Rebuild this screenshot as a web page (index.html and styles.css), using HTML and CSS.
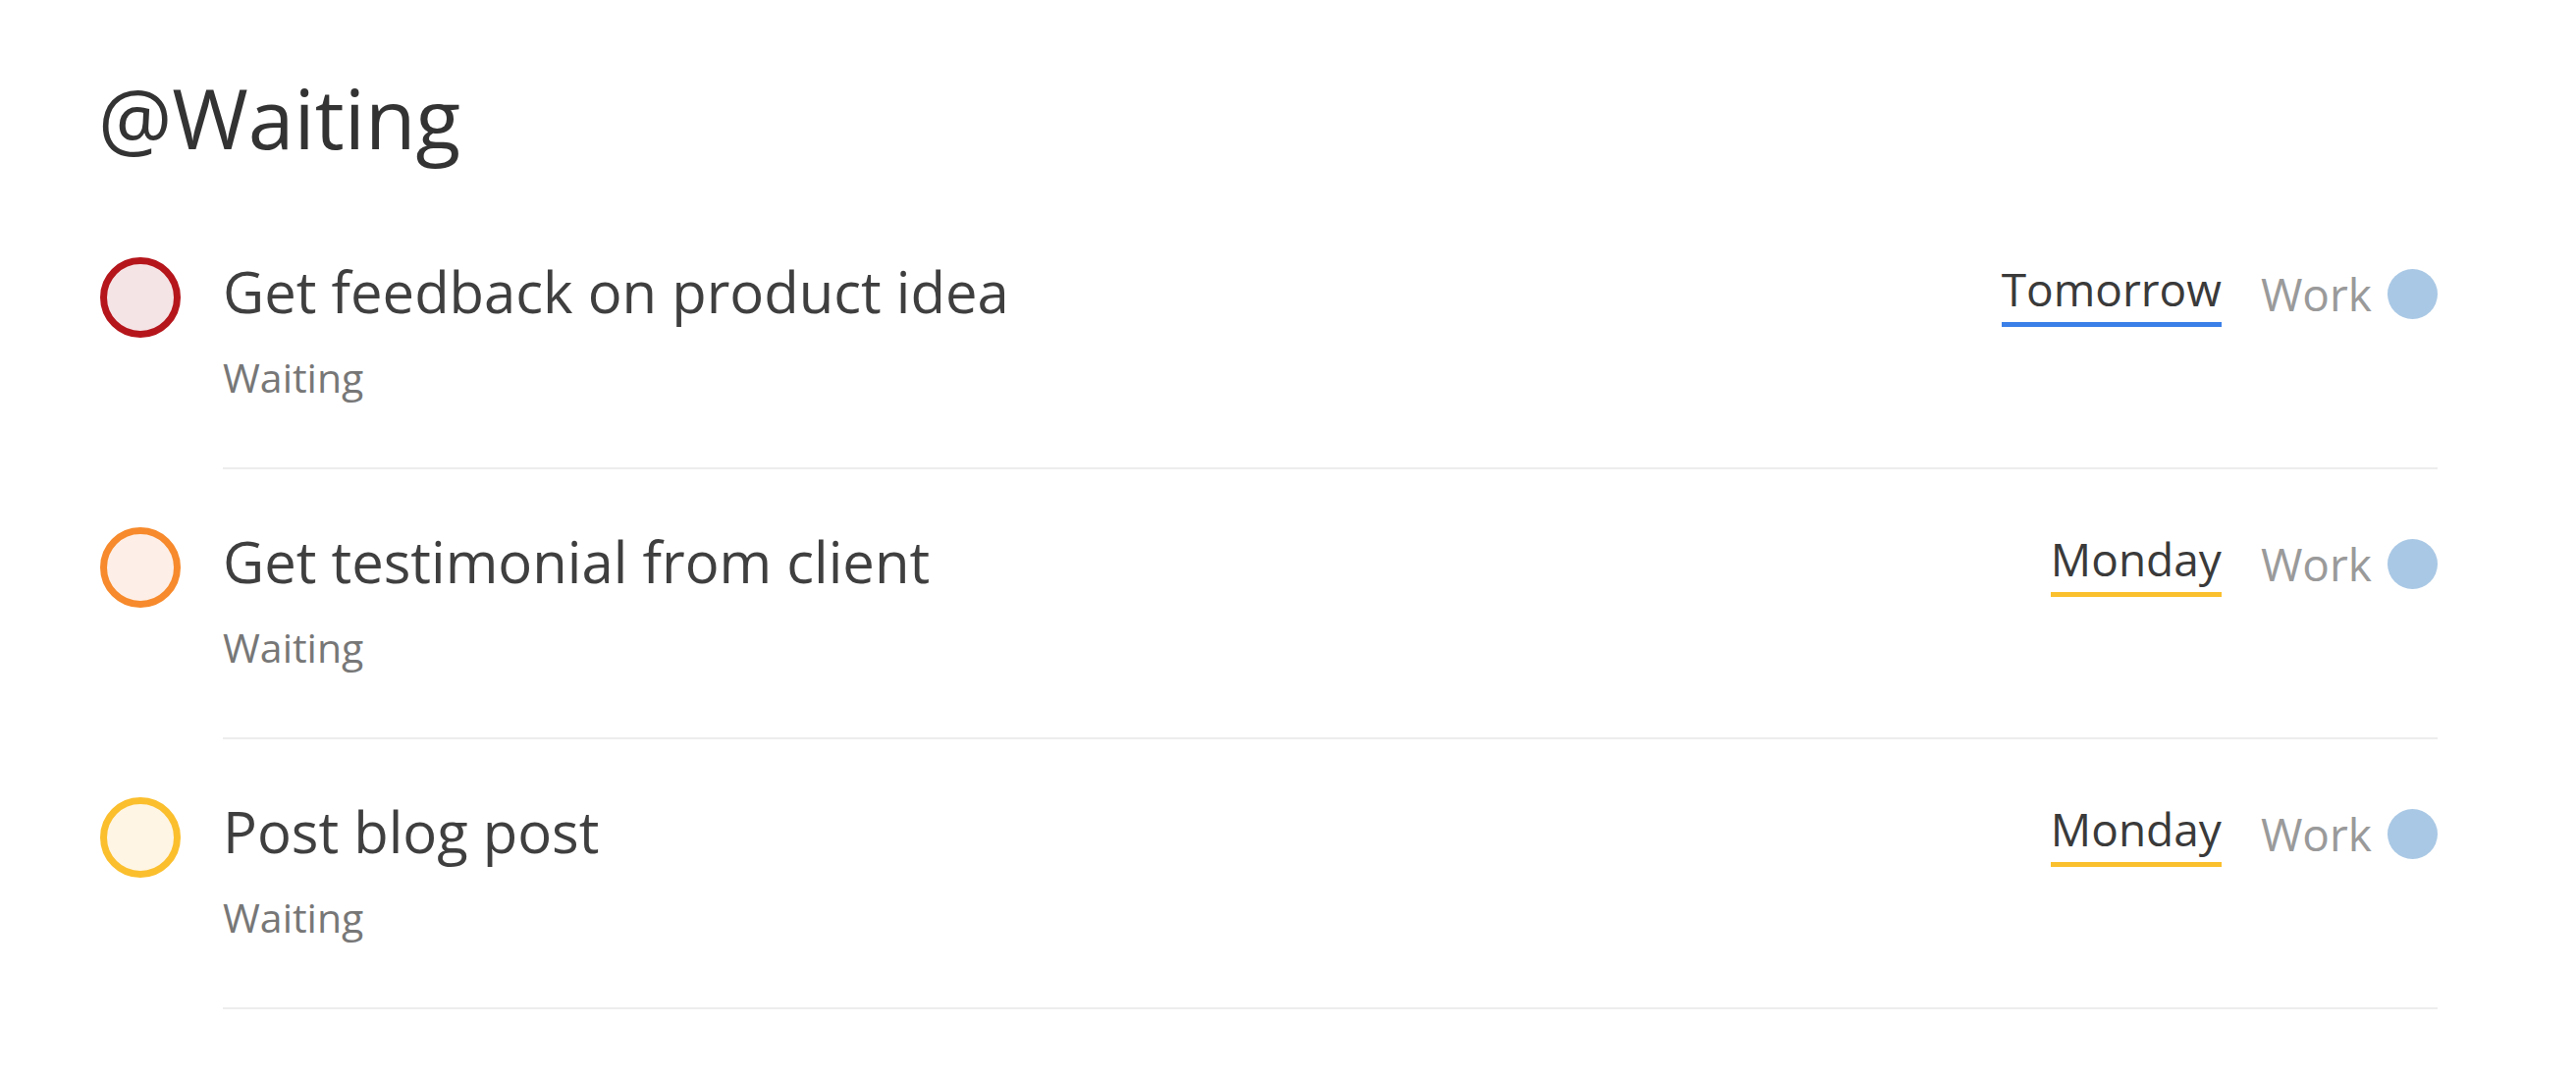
FILE: index.html
```html
<!DOCTYPE html>
<html lang="en">
<head>
<meta charset="utf-8">
<title>@Waiting</title>
<link rel="stylesheet" href="styles.css">
</head>
<body>
<main class="page">
  <h1 class="heading">@Waiting</h1>
  <ul class="tasks">
    <li class="task">
      <span class="check check-red"></span>
      <div class="task-body">
        <div class="task-line">
          <span class="task-title">Get feedback on product idea</span>
          <div class="meta">
            <span class="due due-blue">Tomorrow</span>
            <span class="project">Work</span>
            <span class="project-dot"></span>
          </div>
        </div>
        <div class="task-sub">Waiting</div>
      </div>
    </li>
    <li class="task">
      <span class="check check-orange"></span>
      <div class="task-body">
        <div class="task-line">
          <span class="task-title">Get testimonial from client</span>
          <div class="meta">
            <span class="due due-yellow">Monday</span>
            <span class="project">Work</span>
            <span class="project-dot"></span>
          </div>
        </div>
        <div class="task-sub">Waiting</div>
      </div>
    </li>
    <li class="task">
      <span class="check check-yellow"></span>
      <div class="task-body">
        <div class="task-line">
          <span class="task-title">Post blog post</span>
          <div class="meta">
            <span class="due due-yellow">Monday</span>
            <span class="project">Work</span>
            <span class="project-dot"></span>
          </div>
        </div>
        <div class="task-sub">Waiting</div>
      </div>
    </li>
  </ul>
</main>
</body>
</html>
```

FILE: styles.css
```css
html, body {
  margin: 0;
  padding: 0;
  background: #ffffff;
}

body {
  font-family: "Open Sans", "Noto Sans", "DejaVu Sans", sans-serif;
  color: #404040;
}

.page {
  padding: 70px 141px 0 100px;
}

.heading {
  margin: 0 0 33px 0;
  font-size: 84px;
  line-height: 100px;
  font-weight: 400;
  color: #333333;
}

.tasks {
  list-style: none;
  margin: 0;
  padding: 0;
}

.task {
  display: flex;
  align-items: flex-start;
}

.check {
  flex: none;
  box-sizing: border-box;
  width: 82px;
  height: 82px;
  margin: 59px 43px 0 2px;
  border-radius: 50%;
  border: 7px solid;
}

.check-red {
  border-color: #b5161c;
  background: #f5e4e6;
}

.check-orange {
  border-color: #f78a2c;
  background: #fdefe7;
}

.check-yellow {
  border-color: #fbbf2e;
  background: #fef5e4;
}

.task-body {
  flex: 1;
  padding: 54px 0 64px 0;
  border-bottom: 2px solid #ededed;
}

.task-line {
  display: flex;
  align-items: center;
  justify-content: space-between;
  height: 80px;
}

.task-title {
  font-size: 58px;
  line-height: 80px;
  color: #3f3f3f;
  white-space: nowrap;
}

.meta {
  display: flex;
  align-items: center;
  margin-top: 4px;
}

.due {
  font-size: 46px;
  line-height: 56px;
  padding-bottom: 6px;
  border-bottom: 5px solid;
  color: #3a3a3a;
}

.due-blue {
  border-bottom-color: #3b80e8;
}

.due-yellow {
  border-bottom-color: #fbc02d;
}

.project {
  font-size: 46px;
  line-height: 56px;
  margin-left: 40px;
  color: #9a9a9a;
}

.project-dot {
  width: 51px;
  height: 51px;
  margin-left: 16px;
  border-radius: 50%;
  background: #a9c8e5;
}

.task-sub {
  margin-top: 19px;
  font-size: 41px;
  line-height: 56px;
  color: #777777;
}
```
